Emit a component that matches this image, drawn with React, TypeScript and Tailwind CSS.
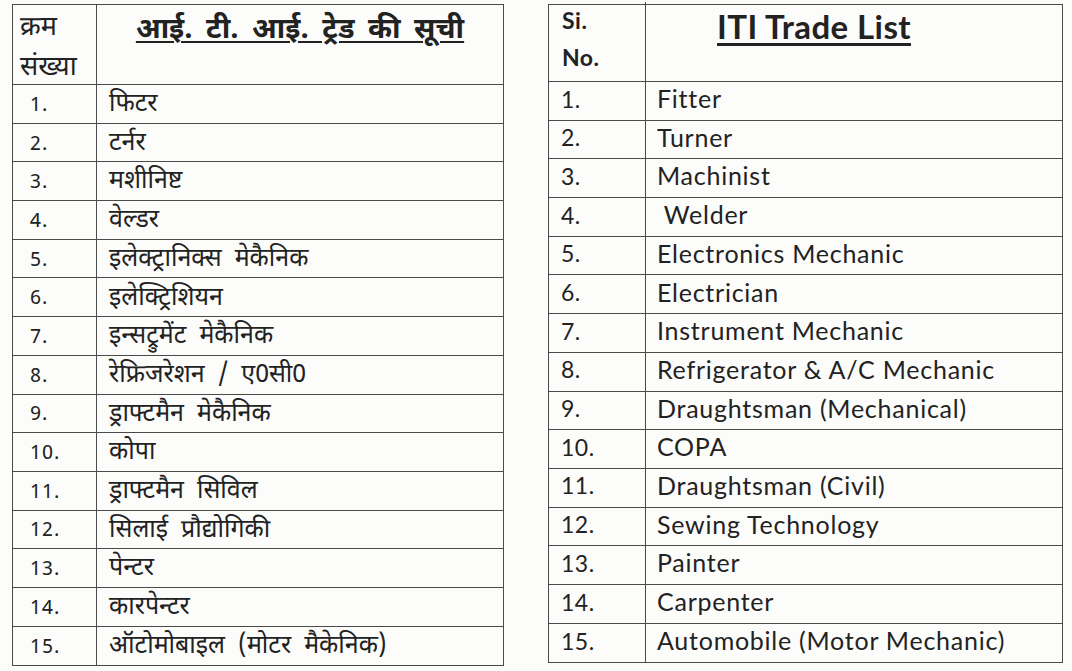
const hindi = [
  'फिटर',
  'टर्नर',
  'मशीनिष्ट',
  'वेल्डर',
  'इलेक्ट्रानिक्स  मेकैनिक',
  'इलेक्ट्रिशियन',
  'इन्सट्रुमेंट  मेकैनिक',
  'रेफ्रिजरेशन  /  ए0सी0',
  'ड्राफ्टमैन  मेकैनिक',
  'कोपा',
  'ड्राफ्टमैन  सिविल',
  'सिलाई  प्रौद्योगिकी',
  'पेन्टर',
  'कारपेन्टर',
  'ऑटोमोबाइल  (मोटर  मैकेनिक)',
];

const english = [
  'Fitter',
  'Turner',
  'Machinist',
  ' Welder',
  'Electronics Mechanic',
  'Electrician',
  'Instrument Mechanic',
  'Refrigerator & A/C Mechanic',
  'Draughtsman (Mechanical)',
  'COPA',
  'Draughtsman (Civil)',
  'Sewing Technology',
  'Painter',
  'Carpenter',
  'Automobile (Motor Mechanic)',
];

const hindiFont = { fontFamily: '"Noto Sans Devanagari", "Noto Sans", "Lohit Devanagari", sans-serif' };

function HindiTable() {
  return (
    <div className="w-[492px] border-[1.5px] border-[#4a4a4a] text-[#222]" style={hindiFont}>
      <div className="flex h-[80px] border-b-[1.5px] border-[#4a4a4a]">
        <div className="w-[84px] shrink-0 border-r-[1.5px] border-[#4a4a4a] pl-[7px] pt-[4px] text-[27px] leading-[40px]">
          <div>क्रम</div>
          <div>संख्या</div>
        </div>
        <div className="flex-1 pt-[4px] text-center text-[29px] font-bold leading-[44px]">
          <span className="underline decoration-2 underline-offset-[3px] [word-spacing:6px]">आई. टी. आई. ट्रेड की सूची</span>
        </div>
      </div>
      {hindi.map((t, i) => (
        <div
          key={i}
          className={`flex h-[38.7px] ${i < hindi.length - 1 ? 'border-b-[1.5px] border-[#4a4a4a]' : ''}`}
        >
          <div className="flex w-[84px] shrink-0 items-center border-r-[1.5px] border-[#4a4a4a] pl-[17px] pt-[4px] text-[20px] tracking-[1px]">
            {i + 1}.
          </div>
          <div className="flex flex-1 items-center whitespace-pre pl-[12px] pt-[4px] text-[25px]">{t}</div>
        </div>
      ))}
    </div>
  );
}

function EnglishTable() {
  return (
    <div
      className="w-[515px] border-[1.5px] border-[#4a4a4a] text-[#222]"
      style={{ fontFamily: 'Lato, "Open Sans", sans-serif' }}
    >
      <div className="flex h-[77px] border-b-[1.5px] border-[#4a4a4a]">
        <div className="w-[97px] shrink-0 border-r-[1.5px] border-[#4a4a4a] pl-[13px] text-[23px] font-bold leading-[37px] tracking-[0.5px] [margin-top:-3px]">
          <div>Si.</div>
          <div>No.</div>
        </div>
        <div className="flex-1 pl-[71px] text-[33px] font-bold leading-[42px] tracking-[0.4px]">
          <span className="underline decoration-[2.5px] underline-offset-[4px]">ITI Trade List</span>
        </div>
      </div>
      {english.map((t, i) => (
        <div
          key={i}
          className={`flex h-[38.7px] ${i < english.length - 1 ? 'border-b-[1.5px] border-[#4a4a4a]' : ''}`}
        >
          <div className="flex w-[97px] shrink-0 items-center border-r-[1.5px] border-[#4a4a4a] pb-[4px] pl-[12px] text-[23px] tracking-[0.5px]">
            {i + 1}.
          </div>
          <div className="flex flex-1 items-center whitespace-pre pb-[4px] pl-[11px] text-[25px] tracking-[0.75px]">{t}</div>
        </div>
      ))}
    </div>
  );
}

export default function App() {
  return (
    <div className="flex h-[671px] w-[1072px] items-start gap-[44px] bg-[#fcfcfb] pl-[12px] pt-[4px]">
      <HindiTable />
      <EnglishTable />
    </div>
  );
}
